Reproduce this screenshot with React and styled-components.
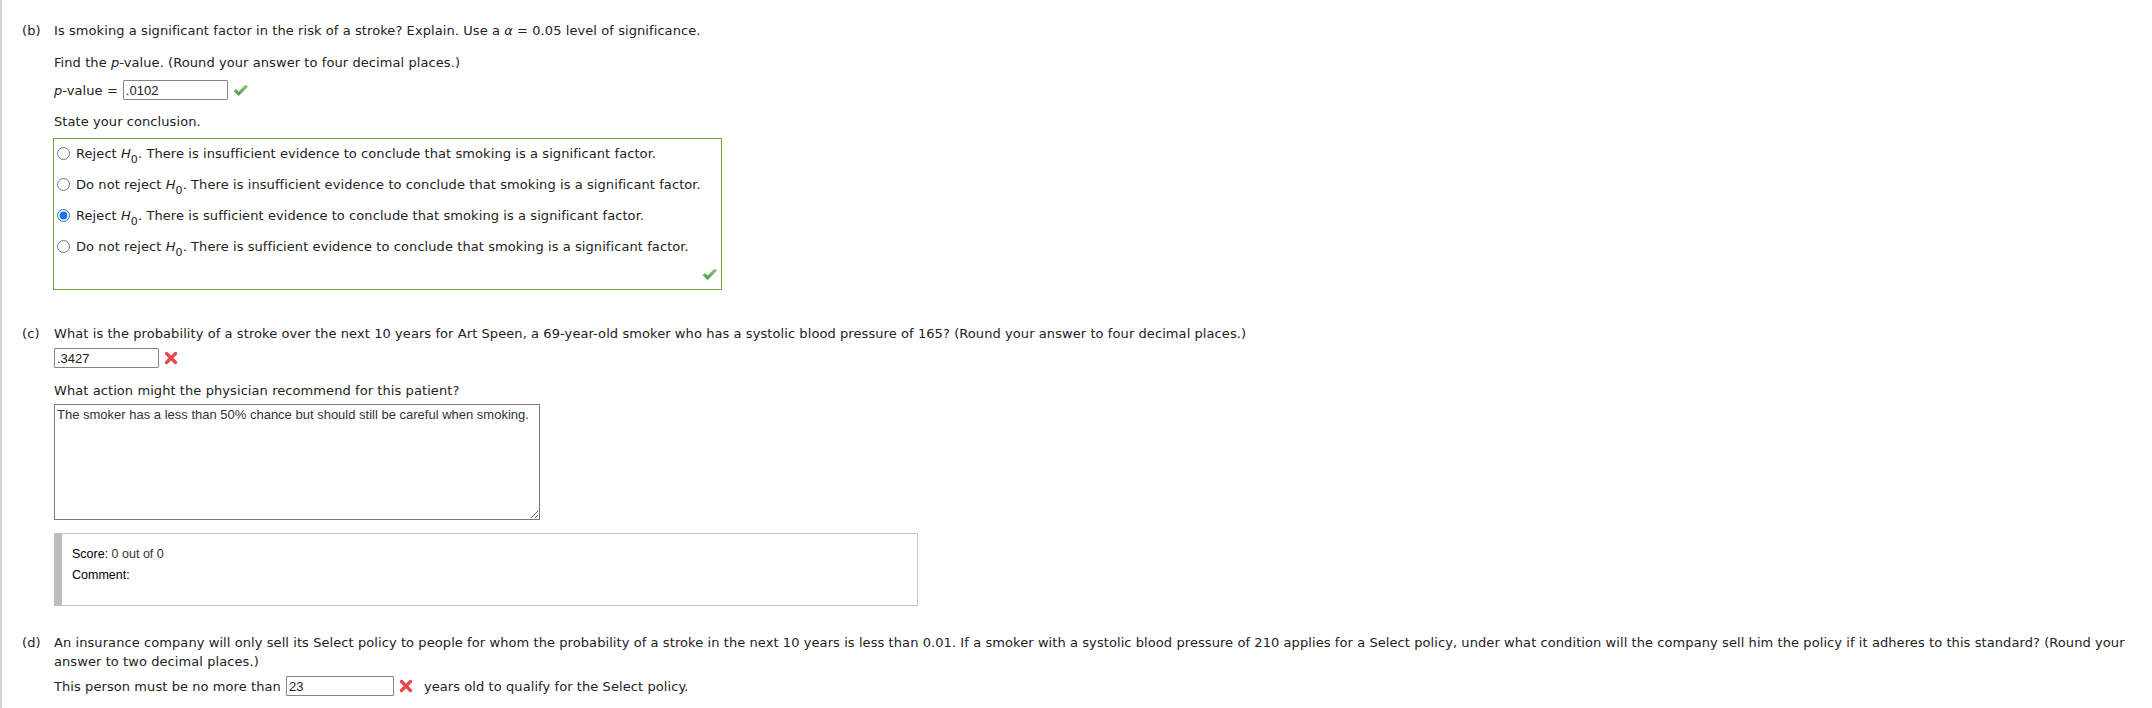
import React from "react";
import styled, { createGlobalStyle } from "styled-components";

const GlobalStyle = createGlobalStyle`
  html, body {
    margin: 0;
    padding: 0;
    background: #fff;
  }
  body {
    font-family: "DejaVu Sans", Verdana, sans-serif;
    font-size: 13px;
    letter-spacing: 0.08px;
    color: #222;
  }
`;

const Page = styled.div`
  min-height: 708px;
  box-sizing: border-box;
  border-left: 2px solid #d2d2d2;
  padding: 21px 20px 0 20px;
`;

const Part = styled.section`
  display: grid;
  grid-template-columns: 32px 1fr;
  margin-bottom: ${({ $gap }) => $gap || 0}px;
`;

const Label = styled.div`
  line-height: 19px;
`;

const Body = styled.div`
  display: flex;
  flex-direction: column;
  align-items: flex-start;
`;

const Text = styled.div`
  line-height: 19px;
  margin-top: ${({ $top }) => $top || 0}px;
`;

const Row = styled.div`
  display: flex;
  align-items: center;
  gap: 5px;
  line-height: 19px;
  margin-top: ${({ $top }) => $top || 0}px;
`;

const Answer = styled.input`
  box-sizing: border-box;
  width: ${({ $w }) => $w || 105}px;
  height: 20px;
  margin: 0;
  padding: 0 2px;
  border: 1px solid #858585;
  border-radius: 1px;
  font-family: "Liberation Sans", Arial, sans-serif;
  font-size: 13px;
  letter-spacing: 0;
  color: #222;
  background: #fff;
  outline: none;
`;

const ChoiceBox = styled.div`
  box-sizing: border-box;
  width: 669px;
  margin-top: 7px;
  margin-left: -1px;
  border: 1px solid #6aab3c;
  padding: 4px 0 7px 0;
  display: flex;
  flex-direction: column;
  gap: 10px;
`;

const Choice = styled.label`
  display: flex;
  align-items: center;
  height: 21px;
  line-height: 19px;

  input {
    margin: 0 6px 0 3px;
    width: 13px;
    height: 13px;
    accent-color: #1a73e8;
  }
`;

const BoxFoot = styled.div`
  display: flex;
  justify-content: flex-end;
  padding-right: 4px;
  height: 14px;
  margin-top: 1px;
`;

const H0 = styled.span`
  font-style: italic;
  sub {
    font-style: normal;
    font-size: 11px;
    vertical-align: -5px;
    line-height: 0;
  }
`;

const Note = styled.textarea`
  box-sizing: border-box;
  width: 486px;
  height: 116px;
  margin: 4px 0 0 0;
  padding: 2px;
  border: 1px solid #7a7a7a;
  font-family: "Liberation Sans", Arial, sans-serif;
  font-size: 13px;
  letter-spacing: 0;
  color: #333;
  resize: both;
  outline: none;
`;

const ScoreBox = styled.div`
  box-sizing: border-box;
  width: 864px;
  margin-top: 13px;
  border: 1px solid #c6c6c6;
  border-left: 8px solid #bdbdbd;
  padding: 10px 0 19px 10px;
  font-family: "Liberation Sans", Arial, sans-serif;
  font-size: 12.5px;
  letter-spacing: 0;
  line-height: 21px;
  color: #333;
`;

const Strong = styled.span`
  color: #000;
`;

const Check = () => (
  <svg width="15" height="13" viewBox="0 0 15 13">
    <defs>
      <linearGradient id="chk" x1="0" y1="0" x2="0" y2="1">
        <stop offset="0" stopColor="#8fd07a" />
        <stop offset="1" stopColor="#3f9a3a" />
      </linearGradient>
    </defs>
    <path
      d="M1 7.2 L3 5.4 L5.6 8 L12.6 1 L14.4 2.8 L5.6 11.8 Z"
      fill="url(#chk)"
      stroke="#4d9e45"
      strokeWidth="0.6"
      strokeLinejoin="round"
    />
  </svg>
);

const Cross = () => (
  <svg width="14" height="14" viewBox="0 0 14 14">
    <path
      d="M2.5 2.5 L11.5 11.5 M11.5 2.5 L2.5 11.5"
      stroke="#e8484e"
      strokeWidth="3.4"
      strokeLinecap="round"
    />
  </svg>
);

const Hnot = () => (
  <H0>
    H<sub>0</sub>
  </H0>
);

const choices = [
  { pre: "Reject", post: "There is insufficient evidence to conclude that smoking is a significant factor." },
  { pre: "Do not reject", post: "There is insufficient evidence to conclude that smoking is a significant factor." },
  { pre: "Reject", post: "There is sufficient evidence to conclude that smoking is a significant factor.", on: true },
  { pre: "Do not reject", post: "There is sufficient evidence to conclude that smoking is a significant factor." },
];

export default function App() {
  return (
    <>
      <GlobalStyle />
      <Page>
        <Part $gap={34}>
          <Label>(b)</Label>
          <Body>
            <Text>
              Is smoking a significant factor in the risk of a stroke? Explain. Use a <i>α</i> = 0.05 level of significance.
            </Text>
            <Text $top={13}>
              Find the <i>p</i>-value. (Round your answer to four decimal places.)
            </Text>
            <Row $top={8}>
              <span>
                <i>p</i>-value =
              </span>
              <Answer defaultValue=".0102" readOnly />
              <Check />
            </Row>
            <Text $top={12}>State your conclusion.</Text>
            <ChoiceBox>
              {choices.map((c, i) => (
                <Choice key={i}>
                  <input type="radio" name="concl" defaultChecked={!!c.on} />
                  <span>
                    {c.pre} <Hnot />. {c.post}
                  </span>
                </Choice>
              ))}
              <BoxFoot>
                <Check />
              </BoxFoot>
            </ChoiceBox>
          </Body>
        </Part>

        <Part $gap={27}>
          <Label>(c)</Label>
          <Body>
            <Text>
              What is the probability of a stroke over the next 10 years for Art Speen, a 69-year-old smoker who has a systolic blood pressure of 165? (Round your answer to four decimal places.)
            </Text>
            <Row $top={5}>
              <Answer defaultValue=".3427" readOnly />
              <Cross />
            </Row>
            <Text $top={13}>What action might the physician recommend for this patient?</Text>
            <Note
              readOnly
              defaultValue="The smoker has a less than 50% chance but should still be careful when smoking."
            />
            <ScoreBox>
              <div>
                <Strong>Score:</Strong> 0 out of 0
              </div>
              <div>
                <Strong>Comment:</Strong>
              </div>
            </ScoreBox>
          </Body>
        </Part>

        <Part>
          <Label>(d)</Label>
          <Body>
            <Text>
              An insurance company will only sell its Select policy to people for whom the probability of a stroke in the next 10 years is less than 0.01. If a smoker with a systolic blood pressure of 210 applies for a Select policy, under what condition will the company sell him the policy if it adheres to this standard? (Round your answer to two decimal places.)
            </Text>
            <Row $top={5}>
              <span>This person must be no more than</span>
              <Answer defaultValue="23" readOnly $w={108} />
              <Cross />
              <span style={{ marginLeft: 6 }}>years old to qualify for the Select policy.</span>
            </Row>
          </Body>
        </Part>
      </Page>
    </>
  );
}
